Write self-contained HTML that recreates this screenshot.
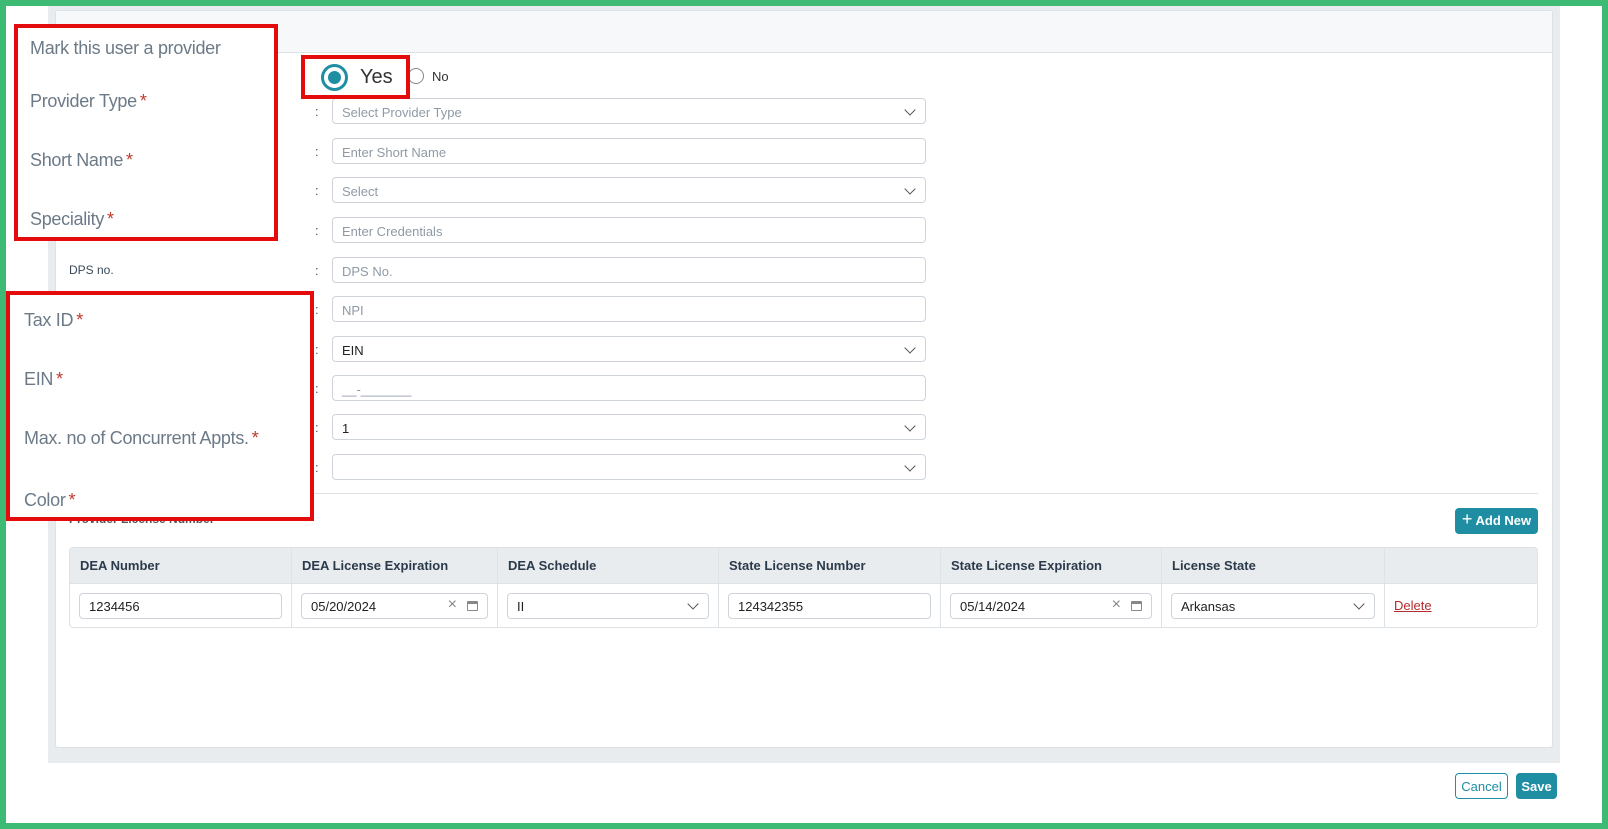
<!DOCTYPE html>
<html><head><style>
*{box-sizing:border-box;margin:0;padding:0}
body{width:1608px;height:829px;position:relative;background:#3dba74;font-family:"Liberation Sans",sans-serif;overflow:hidden}
.a{position:absolute}
.inner{left:6px;top:6px;width:1596px;height:817px;background:#fff}
.gray{left:48px;top:6px;width:1512px;height:757px;background:#e9ecef}
.card{left:55px;top:10px;width:1498px;height:738px;background:#fff;border:1px solid #dde2e6;border-radius:3px}
.hdr{left:56px;top:11px;width:1496px;height:42px;background:#f7f8fa;border-bottom:1px solid #dde2e6}
.in{left:332px;width:594px;height:26px;border:1px solid #ced4da;border-radius:4px;font-size:13px;color:#8f9aa6;padding:6px 9px;background:#fff}
.in.v{color:#222}
.col{left:315px;font-size:13px;color:#555}
.chev{position:absolute;right:11px;top:7px;width:8px;height:8px;border-right:1.5px solid #555;border-bottom:1.5px solid #555;transform:rotate(45deg)}
.red{border:4px solid #e30b0b;background:#fff}
.lbl{font-size:18px;color:#6c7a87;letter-spacing:-0.3px}
.lbl b{color:#c0392b;font-weight:normal;margin-left:3px}
table{border-collapse:separate;border-spacing:0;font-size:13px}
.tb{left:69px;top:547px;width:1469px;height:81px;border:1px solid #dde2e6;border-radius:4px;overflow:hidden}
th{background:#e9ecef;height:36px;text-align:left;padding-left:10px;color:#2b3a4a;font-weight:bold;border-right:1px solid #dde2e6;border-bottom:1px solid #dde2e6}
td{height:43px;padding:0 9px;border-right:1px solid #dde2e6}
.ti{height:26px;border:1px solid #ced4da;border-radius:4px;padding:5px 9px;color:#222;position:relative}
.btn{background:#1f8ea3;color:#fff;font-weight:bold;font-size:13px;border-radius:4px;text-align:center}
</style></head><body>
<div class="a inner"></div>
<div class="a gray"></div>
<div class="a card"></div>
<div class="a hdr"></div>

<div class="a" style="left:432px;top:69px;font-size:13px;color:#333">No</div>
<div class="a" style="left:408px;top:68px;width:16px;height:16px;border:1px solid #888;border-radius:50%"></div>

<div class="a col" style="top:104px">:</div><div class="a in" style="top:98px">Select Provider Type<span class="chev"></span></div>
<div class="a col" style="top:144px">:</div><div class="a in" style="top:138px">Enter Short Name</div>
<div class="a col" style="top:183px">:</div><div class="a in" style="top:177px">Select<span class="chev"></span></div>
<div class="a col" style="top:223px">:</div><div class="a in" style="top:217px">Enter Credentials</div>
<div class="a" style="left:69px;top:263px;font-size:12px;color:#3a4a5a">DPS no.</div>
<div class="a col" style="top:263px">:</div><div class="a in" style="top:257px">DPS No.</div>
<div class="a col" style="top:302px">:</div><div class="a in" style="top:296px">NPI</div>
<div class="a col" style="top:342px">:</div><div class="a in v" style="top:336px">EIN<span class="chev"></span></div>
<div class="a col" style="top:381px">:</div><div class="a in" style="top:375px">__-_______</div>
<div class="a col" style="top:420px">:</div><div class="a in v" style="top:414px">1<span class="chev"></span></div>
<div class="a col" style="top:460px">:</div><div class="a in" style="top:454px"><span class="chev"></span></div>

<div class="a" style="left:55px;top:493px;width:1483px;height:1px;background:#dde2e6"></div>
<div class="a" style="left:69px;top:512px;font-size:12px;font-weight:bold;color:#555">Provider License Number</div>
<div class="a btn" style="left:1455px;top:508px;width:83px;height:26px;padding-top:5px"><span style="font-size:18px;font-weight:normal;line-height:12px">+</span> Add New</div>

<div class="a tb"><table style="width:1469px">
<tr><th style="width:222px">DEA Number</th><th style="width:206px">DEA License Expiration</th><th style="width:221px">DEA Schedule</th><th style="width:222px">State License Number</th><th style="width:221px">State License Expiration</th><th style="width:223px">License State</th><th style="border-right:none"></th></tr>
<tr><td><div class="ti">1234456</div></td>
<td><div class="ti">05/20/2024<span style="position:absolute;right:30px;top:2px;color:#888;font-size:16px">×</span><span style="position:absolute;right:9px;top:7px;width:11px;height:10px;border:1.5px solid #888;border-top-width:3px;border-radius:1px"></span></div></td>
<td><div class="ti">II<span class="chev" style="top:6px"></span></div></td>
<td><div class="ti">124342355</div></td>
<td><div class="ti">05/14/2024<span style="position:absolute;right:30px;top:2px;color:#888;font-size:16px">×</span><span style="position:absolute;right:9px;top:7px;width:11px;height:10px;border:1.5px solid #888;border-top-width:3px;border-radius:1px"></span></div></td>
<td><div class="ti">Arkansas<span class="chev" style="top:6px"></span></div></td>
<td style="border-right:none"><span style="color:#b52a2a;text-decoration:underline">Delete</span></td></tr>
</table></div>

<div class="a" style="left:1455px;top:773px;width:53px;height:26px;border:1px solid #1f8ea3;border-radius:4px;color:#1f8ea3;font-size:13px;text-align:center;padding-top:5px">Cancel</div>
<div class="a btn" style="left:1516px;top:773px;width:41px;height:26px;padding-top:6px">Save</div>

<div class="a red" style="left:14px;top:24px;width:264px;height:217px"></div>
<div class="a lbl" style="left:30px;top:38px">Mark this user a provider</div>
<div class="a lbl" style="left:30px;top:91px">Provider Type<b>*</b></div>
<div class="a lbl" style="left:30px;top:150px">Short Name<b>*</b></div>
<div class="a lbl" style="left:30px;top:209px">Speciality<b>*</b></div>

<div class="a red" style="left:6px;top:291px;width:308px;height:230px"></div>
<div class="a lbl" style="left:24px;top:310px">Tax ID<b>*</b></div>
<div class="a lbl" style="left:24px;top:369px">EIN<b>*</b></div>
<div class="a lbl" style="left:24px;top:428px">Max. no of Concurrent Appts.<b>*</b></div>
<div class="a lbl" style="left:24px;top:490px">Color<b>*</b></div>

<div class="a red" style="left:301px;top:55px;width:109px;height:44px"></div>
<div class="a" style="left:321px;top:64px;width:27px;height:27px;border:3px solid #1f8ea3;border-radius:50%"><div style="margin:4px;width:13px;height:13px;background:#1f8ea3;border-radius:50%"></div></div>
<div class="a" style="left:360px;top:66px;font-size:20px;color:#333">Yes</div>
</body></html>
